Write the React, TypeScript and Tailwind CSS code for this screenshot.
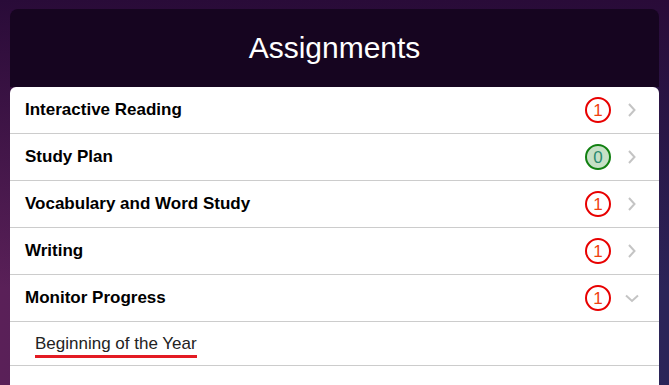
import React from 'react';

const rows = [
  { title: 'Interactive Reading', count: 1 },
  { title: 'Study Plan', count: 0 },
  { title: 'Vocabulary and Word Study', count: 1 },
  { title: 'Writing', count: 1 },
  { title: 'Monitor Progress', count: 1, open: true },
];

function Chevron({ open }: { open?: boolean }) {
  return (
    <svg width="16" height="16" viewBox="0 0 16 16" className="text-[#c4c4c4]">
      {open ? (
        <path d="M2 5.5 L8 11 L14 5.5" fill="none" stroke="currentColor" strokeWidth="2" />
      ) : (
        <path d="M5 2 L10.5 8 L5 14" fill="none" stroke="currentColor" strokeWidth="2" />
      )}
    </svg>
  );
}

export default function App() {
  return (
    <div className="h-[385px] w-[669px] overflow-hidden bg-[linear-gradient(to_bottom,#290b38_0%,rgba(41,11,56,0)_75%),linear-gradient(to_right,#5a2058,#2a2458)] px-[10px] pt-[9px] font-['Liberation_Sans',Arial,sans-serif]">
      <div className="flex h-[78px] items-center justify-center rounded-t-lg bg-[#160520] pb-[2px]">
        <h1 className="text-[30px] text-white">Assignments</h1>
      </div>
      <div className="bg-white rounded-t-md h-[300px]">
        {rows.map((r) => (
          <div key={r.title} className="flex h-[47px] items-center border-b border-[#cccccc] pl-[15px] pr-[19px]">
            <span className="flex-1 text-[17px] font-bold text-black">{r.title}</span>
            <span
              className={`flex h-[26px] w-[26px] items-center justify-center rounded-full border-2 text-[17px] leading-none ${
                r.count === 0
                  ? 'border-[#118011] bg-[#c6e0c6] text-[#2a8a70]'
                  : 'border-[#e80000] bg-white text-[#f04010]'
              }`}
            >
              {r.count}
            </span>
            <span className="ml-[13px] flex w-[16px] justify-center">
              <Chevron open={r.open} />
            </span>
          </div>
        ))}
        <div className="flex h-[44px] items-center border-b border-[#cccccc] pl-[25px] pt-[4px]">
          <span className="border-b-[3px] border-[#e31b23] pb-[1px] text-[17px] leading-[20px] text-[#222]">
            Beginning of the Year
          </span>
        </div>
      </div>
    </div>
  );
}
